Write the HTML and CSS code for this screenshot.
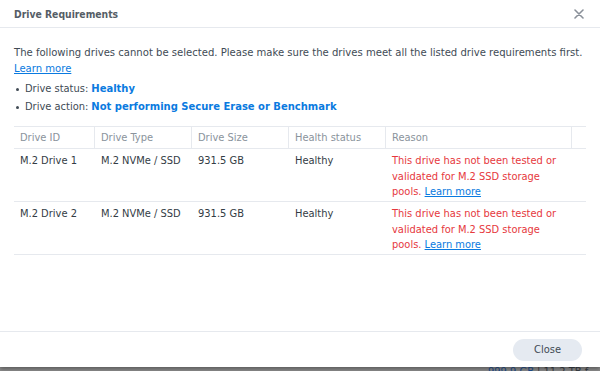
FILE: index.html
```html
<!DOCTYPE html>
<html>
<head>
<meta charset="utf-8">
<link rel="stylesheet" href="styles.css">
</head>
<body>
<div class="backdrop"><span class="bg-link">999.9 GB</span> | 11.2 TB f</div>
<div class="dialog">
  <div class="titlebar">
    <span class="title">Drive Requirements</span>
    <svg class="close-x" width="10" height="10" viewBox="0 0 10 10"><path d="M1 1 L9 9 M9 1 L1 9" stroke="#8a9099" stroke-width="1.6" stroke-linecap="round"/></svg>
  </div>
  <div class="content">
    <p class="intro">The following drives cannot be selected. Please make sure the drives meet all the listed drive requirements first. <a class="link" href="#">Learn more</a></p>
    <ul class="reqs">
      <li><span class="label">Drive status:</span> <span class="val">Healthy</span></li>
      <li><span class="label">Drive action:</span> <span class="val">Not performing Secure Erase or Benchmark</span></li>
    </ul>
    <div class="table">
      <div class="row head">
        <div class="c c1">Drive ID</div>
        <div class="c c2">Drive Type</div>
        <div class="c c3">Drive Size</div>
        <div class="c c4">Health status</div>
        <div class="c c5">Reason</div>
        <div class="c c6"></div>
      </div>
      <div class="row">
        <div class="c c1">M.2 Drive 1</div>
        <div class="c c2">M.2 NVMe / SSD</div>
        <div class="c c3">931.5 GB</div>
        <div class="c c4">Healthy</div>
        <div class="c c5 reason">This drive has not been tested or validated for M.2 SSD storage pools. <a class="link" href="#">Learn more</a></div>
        <div class="c c6"></div>
      </div>
      <div class="row">
        <div class="c c1">M.2 Drive 2</div>
        <div class="c c2">M.2 NVMe / SSD</div>
        <div class="c c3">931.5 GB</div>
        <div class="c c4">Healthy</div>
        <div class="c c5 reason">This drive has not been tested or validated for M.2 SSD storage pools. <a class="link" href="#">Learn more</a></div>
        <div class="c c6"></div>
      </div>
    </div>
  </div>
  <div class="footer">
    <button class="btn">Close</button>
  </div>
</div>
</body>
</html>
```

FILE: styles.css
```css
html, body {
  margin: 0;
  padding: 0;
}
body {
  width: 600px;
  height: 371px;
  overflow: hidden;
  background: #8c8c8c;
  position: relative;
  font-family: "DejaVu Sans Condensed", "DejaVu Sans", Verdana, sans-serif;
  font-stretch: semi-condensed;
  color: #414b55;
}
.backdrop {
  position: absolute;
  left: 488px;
  top: 365px;
  font-size: 11px;
  color: #3a3f45;
  white-space: nowrap;
}
.bg-link { color: #1f4f8f; text-decoration: underline; }
.dialog {
  position: relative;
  width: 600px;
  height: 367px;
  background: #fff;
  box-shadow: 0 2px 4px rgba(0,0,0,0.35);
  display: flex;
  flex-direction: column;
}
.titlebar {
  height: 27px;
  border-bottom: 1px solid #e6e9ee;
  display: flex;
  align-items: center;
  justify-content: space-between;
  padding: 0 16px 0 14px;
}
.title {
  font-size: 10.3px;
  font-weight: bold;
  color: #555d66;
}
.content {
  flex: 1;
  padding: 17px 14px 0 14px;
}
.intro {
  margin: 0;
  font-size: 11.2px;
  line-height: 16px;
  color: #414b55;
}
.link {
  color: #0a7ae0;
  text-decoration: underline;
}
.reqs {
  margin: 3px 0 0 0;
  padding: 0;
  font-size: 11px;
  list-style: none;
}
.reqs li {
  height: 18px;
  line-height: 18px;
  display: flex;
  align-items: center;
}
.reqs li::before {
  content: "";
  width: 3px;
  height: 3px;
  border-radius: 50%;
  background: #414b55;
  margin: 0 6px 0 2px;
}
.label { margin-right: 3px; }
.val {
  color: #0a7ae0;
  font-weight: bold;
  font-size: 11.1px;
}
.table {
  margin-top: 10px;
  border-top: 1px solid #e6e9ee;
  width: 572px;
  font-size: 11px;
}
.row {
  display: grid;
  grid-template-columns: 81px 97px 97px 97px 186px 14px;
  border-bottom: 1px solid #e6e9ee;
}
.row .c {
  padding: 4px 6px 7px 6px;
  line-height: 15.5px;
  color: #333c45;
}
.row.head .c {
  padding: 3px 6px 3px 6px;
  height: 15px;
  color: #8a939c;
  border-right: 1px solid #e6e9ee;
}
.row.head .c6 { border-right: none; }
.row:not(.head) { height: 53px; box-sizing: border-box; }
.row .reason {
  color: #e6383d;
  padding-right: 2px;
}
.footer {
  height: 35px;
  border-top: 1px solid #e6e9ee;
  display: flex;
  align-items: center;
  justify-content: flex-end;
  padding-right: 18px;
}
.btn {
  width: 69px;
  height: 22px;
  border: none;
  border-radius: 11px;
  background: #e5eaf1;
  color: #414b55;
  font-family: "DejaVu Sans Condensed", "DejaVu Sans", Verdana, sans-serif;
  font-stretch: semi-condensed;
  font-size: 11px;
  padding: 0;
}
```
